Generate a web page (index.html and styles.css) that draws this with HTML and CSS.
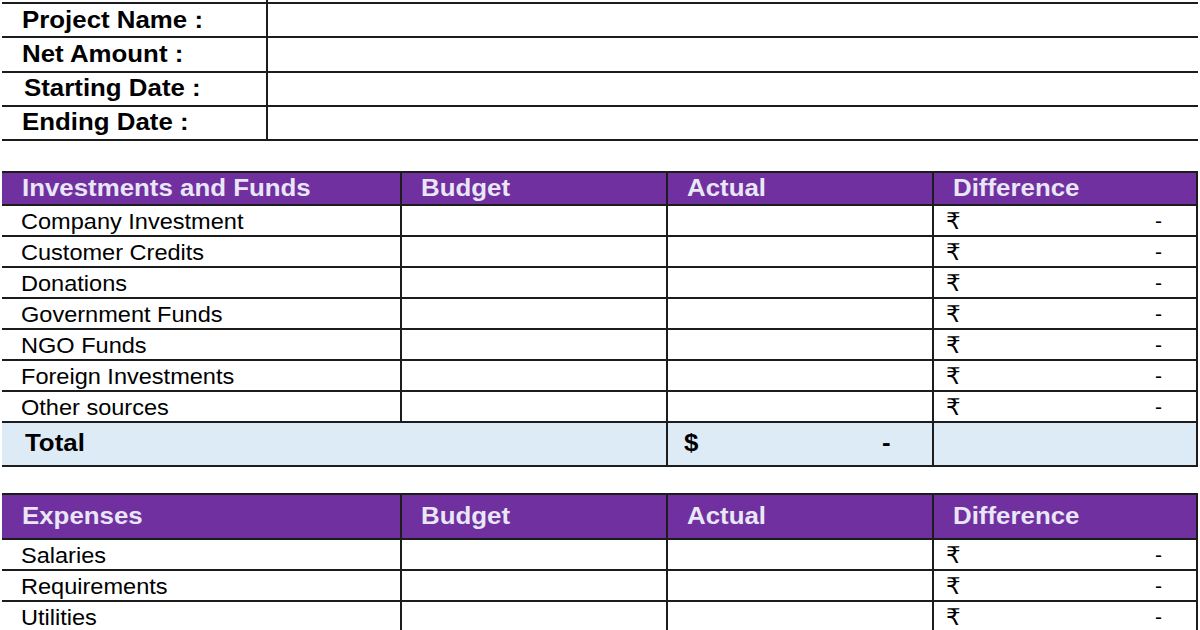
FILE: index.html
```html
<!DOCTYPE html>
<html lang="en">
<head>
<meta charset="utf-8">
<title>Project Budget</title>
<link rel="stylesheet" href="styles.css">
</head>
<body>
<div class="sheet">
  <table class="info">
    <colgroup><col class="c-label"><col></colgroup>
    <tr class="r-info"><td></td><td></td></tr>
    <tr class="r-info"><td class="lbl"><span class="tb">Project Name :</span></td><td></td></tr>
    <tr class="r-info"><td class="lbl"><span class="tb">Net Amount :</span></td><td></td></tr>
    <tr class="r-info"><td class="lbl lbl-in"><span class="tb">Starting Date :</span></td><td></td></tr>
    <tr class="r-info"><td class="lbl"><span class="tb">Ending Date :</span></td><td></td></tr>
  </table>

  <table class="grid">
    <colgroup><col class="c-first"><col class="c-mid"><col class="c-mid"><col></colgroup>
    <tr class="head"><th><span class="tb">Investments and Funds</span></th><th><span class="tb">Budget</span></th><th><span class="tb">Actual</span></th><th><span class="tb">Difference</span></th></tr>
    <tr class="row"><td><span class="tr">Company Investment</span></td><td></td><td></td><td class="acc"><span class="rs">₹</span><span class="dash">-</span></td></tr>
    <tr class="row"><td><span class="tr">Customer Credits</span></td><td></td><td></td><td class="acc"><span class="rs">₹</span><span class="dash">-</span></td></tr>
    <tr class="row"><td><span class="tr">Donations</span></td><td></td><td></td><td class="acc"><span class="rs">₹</span><span class="dash">-</span></td></tr>
    <tr class="row"><td><span class="tr">Government Funds</span></td><td></td><td></td><td class="acc"><span class="rs">₹</span><span class="dash">-</span></td></tr>
    <tr class="row"><td><span class="tr">NGO Funds</span></td><td></td><td></td><td class="acc"><span class="rs">₹</span><span class="dash">-</span></td></tr>
    <tr class="row"><td><span class="tr">Foreign Investments</span></td><td></td><td></td><td class="acc"><span class="rs">₹</span><span class="dash">-</span></td></tr>
    <tr class="row"><td><span class="tr">Other sources</span></td><td></td><td></td><td class="acc"><span class="rs">₹</span><span class="dash">-</span></td></tr>
    <tr class="total"><td colspan="2" class="tot-lbl"><span class="tb">Total</span></td><td class="tot-acc"><span class="tb sym">$</span><span class="tb dsh">-</span></td><td></td></tr>
  </table>

  <table class="grid">
    <colgroup><col class="c-first"><col class="c-mid"><col class="c-mid"><col></colgroup>
    <tr class="head head-tall"><th><span class="tb">Expenses</span></th><th><span class="tb">Budget</span></th><th><span class="tb">Actual</span></th><th><span class="tb">Difference</span></th></tr>
    <tr class="row"><td><span class="tr">Salaries</span></td><td></td><td></td><td class="acc"><span class="rs">₹</span><span class="dash">-</span></td></tr>
    <tr class="row"><td><span class="tr">Requirements</span></td><td></td><td></td><td class="acc"><span class="rs">₹</span><span class="dash">-</span></td></tr>
    <tr class="row"><td><span class="tr">Utilities</span></td><td></td><td></td><td class="acc"><span class="rs">₹</span><span class="dash">-</span></td></tr>
  </table>
</div>
</body>
</html>
```

FILE: styles.css
```css
html, body {
  margin: 0;
  padding: 0;
  background: #ffffff;
  overflow: hidden;
}
body {
  font-family: "Liberation Sans", Arial, sans-serif;
  color: #000;
}
.sheet {
  width: 1196px;
  margin-left: 2px;
  margin-top: -32px;
}
table {
  width: 1196px;
  border-collapse: collapse;
  table-layout: fixed;
}
td, th {
  box-sizing: border-box;
  border: 2px solid #1c1c1c;
  padding: 0;
  white-space: nowrap;
  overflow: hidden;
  text-align: left;
  line-height: 1;
}
td:first-child, th:first-child {
  border-left: none;
}
.tb, .tr {
  display: inline-block;
  transform-origin: left center;
  line-height: 1;
}
.tb {
  font-weight: bold;
  font-size: 23.5px;
  transform: scaleX(1.1);
}
.tr {
  font-weight: normal;
  font-size: 22px;
  transform: scaleX(1.07);
}

/* info block */
.c-label { width: 265px; }
.r-info td {
  height: 34.2px;
  vertical-align: bottom;
  padding-bottom: 4px;
}
.info td { border-right: none; }
.info td:first-child { border-right: 2px solid #1c1c1c; }
.lbl { padding-left: 20px; }
.lbl-in { padding-left: 22px; }
.info { margin-bottom: 30px; }

/* grid blocks */
.c-first { width: 399px; }
.c-mid { width: 266px; }
.head th {
  background: #7030a0;
  color: #e9e6f6;
  height: 33px;
  padding-left: 19px;
  vertical-align: middle;
}
.head th:first-child { padding-left: 20px; }
.head-tall th { height: 45px; }
.row td {
  height: 31px;
  vertical-align: bottom;
  padding-bottom: 2px;
}
.row td:first-child { padding-left: 19px; }
.acc {
  padding-left: 12px;
  padding-right: 34px;
}
.acc .rs {
  font-family: "DejaVu Sans", sans-serif;
  font-size: 23px;
  line-height: 1;
  float: left;
}
.acc .dash {
  float: right;
  font-size: 21px;
  line-height: 1;
  padding-bottom: 2px;
}
.total td {
  background: #ddebf7;
  height: 44px;
  vertical-align: middle;
}
.tot-lbl { padding-left: 23px; }
.tot-acc { padding-left: 16px; padding-right: 42px; }
.tot-acc .sym { float: left; }
.tot-acc .dsh { float: right; }
.grid { margin-bottom: 26px; }
```
